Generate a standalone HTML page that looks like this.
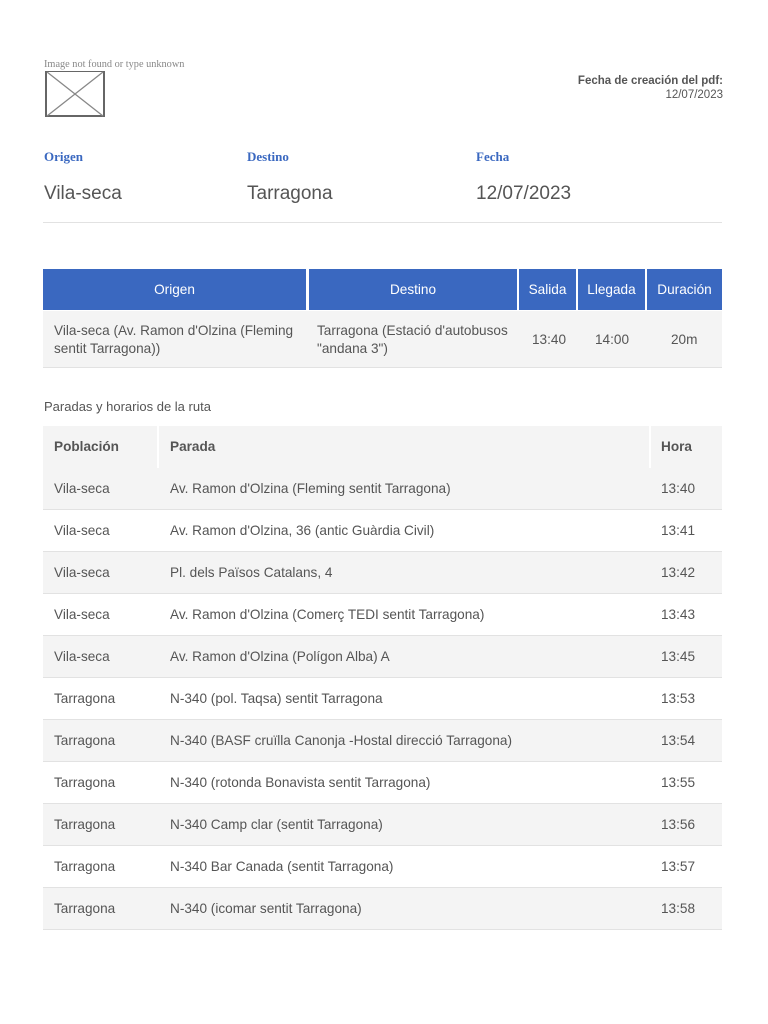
<!DOCTYPE html>
<html><head><meta charset="utf-8"><style>
*{margin:0;padding:0;box-sizing:border-box}
body{width:768px;height:1024px;background:#fff;font-family:"Liberation Sans",sans-serif;color:#555;position:relative;overflow:hidden}
.a{position:absolute;white-space:nowrap}
.lbl{font-family:"Liberation Serif",serif;font-weight:bold;color:#3a68c0;font-size:13px}
.big{font-size:19px;color:#555}
.h{position:absolute;top:269px;height:41px;background:#3a68c0;color:#fff;font-size:13.6px;display:flex;align-items:center;justify-content:center}
.row{position:absolute;left:43px;width:679px;height:42px;border-bottom:1px solid #e2e2e2;font-size:13.6px;color:#555}
.row span{position:absolute;top:13px}
</style></head><body>
<div class="a" style="left:45px;top:71px;width:60px;height:46px;border:2px solid #666;border-top-width:1px;border-left-width:2px"></div>
<svg class="a" style="left:45px;top:71px" width="60" height="46"><path d="M2 1L58 45M58 1L2 45" stroke="#888" stroke-width="1.3"/></svg>
<div class="a" style="left:44px;top:59px;font-family:'Liberation Serif',serif;font-size:10.3px;color:#888">Image not found or type unknown</div>
<div class="a" style="right:45px;top:75px;font-size:11.5px;font-weight:bold;color:#555;text-align:right">Fecha de creación del pdf:</div>
<div class="a" style="right:45px;top:89px;font-size:11.5px;color:#555">12/07/2023</div>
<div class="a lbl" style="left:44px;top:149px">Origen</div>
<div class="a lbl" style="left:247px;top:149px">Destino</div>
<div class="a lbl" style="left:476px;top:149px">Fecha</div>
<div class="a big" style="left:44px;top:183px">Vila-seca</div>
<div class="a big" style="left:247px;top:183px">Tarragona</div>
<div class="a big" style="left:476px;top:183px">12/07/2023</div>
<div class="a" style="left:43px;top:222px;width:679px;height:1px;background:#e2e2e2"></div>
<div class="h" style="left:43px;width:263px">Origen</div>
<div class="h" style="left:309px;width:208px">Destino</div>
<div class="h" style="left:519px;width:57px">Salida</div>
<div class="h" style="left:578px;width:67px">Llegada</div>
<div class="h" style="left:647px;width:75px">Duración</div>
<div class="a" style="left:43px;top:311px;width:679px;height:57px;background:#f4f4f4;border-bottom:1px solid #e2e2e2;font-size:13.6px;color:#555;white-space:normal">
<div class="a" style="left:11px;top:11px;line-height:18px;white-space:normal;width:250px">Vila-seca (Av. Ramon d'Olzina (Fleming sentit Tarragona))</div>
<div class="a" style="left:274px;top:11px;line-height:18px;white-space:normal;width:200px">Tarragona (Estació d'autobusos "andana 3")</div>
<div class="a" style="left:489px;top:21px">13:40</div>
<div class="a" style="left:552px;top:21px">14:00</div>
<div class="a" style="left:628px;top:21px">20m</div>
</div>
<div class="a" style="left:44px;top:399px;font-size:13px;color:#555">Paradas y horarios de la ruta</div>
<div class="a" style="left:43px;top:426px;width:679px;height:42px;background:#f4f4f4;font-size:13.6px;font-weight:bold;color:#555">
<span class="a" style="left:11px;top:13px">Población</span>
<div class="a" style="left:114px;top:0;width:2px;height:42px;background:#fff"></div>
<span class="a" style="left:127px;top:13px">Parada</span>
<div class="a" style="left:606px;top:0;width:2px;height:42px;background:#fff"></div>
<span class="a" style="left:618px;top:13px">Hora</span>
</div>
<div class="row" style="top:468px;background:#f4f4f4"><span style="left:11px">Vila-seca</span><span style="left:127px">Av. Ramon d'Olzina (Fleming sentit Tarragona)</span><span style="left:618px">13:40</span></div>
<div class="row" style="top:510px;background:#fff"><span style="left:11px">Vila-seca</span><span style="left:127px">Av. Ramon d'Olzina, 36 (antic Guàrdia Civil)</span><span style="left:618px">13:41</span></div>
<div class="row" style="top:552px;background:#f4f4f4"><span style="left:11px">Vila-seca</span><span style="left:127px">Pl. dels Països Catalans, 4</span><span style="left:618px">13:42</span></div>
<div class="row" style="top:594px;background:#fff"><span style="left:11px">Vila-seca</span><span style="left:127px">Av. Ramon d'Olzina (Comerç TEDI sentit Tarragona)</span><span style="left:618px">13:43</span></div>
<div class="row" style="top:636px;background:#f4f4f4"><span style="left:11px">Vila-seca</span><span style="left:127px">Av. Ramon d'Olzina (Polígon Alba) A</span><span style="left:618px">13:45</span></div>
<div class="row" style="top:678px;background:#fff"><span style="left:11px">Tarragona</span><span style="left:127px">N-340 (pol. Taqsa) sentit Tarragona</span><span style="left:618px">13:53</span></div>
<div class="row" style="top:720px;background:#f4f4f4"><span style="left:11px">Tarragona</span><span style="left:127px">N-340 (BASF cruïlla Canonja -Hostal direcció Tarragona)</span><span style="left:618px">13:54</span></div>
<div class="row" style="top:762px;background:#fff"><span style="left:11px">Tarragona</span><span style="left:127px">N-340 (rotonda Bonavista sentit Tarragona)</span><span style="left:618px">13:55</span></div>
<div class="row" style="top:804px;background:#f4f4f4"><span style="left:11px">Tarragona</span><span style="left:127px">N-340 Camp clar (sentit Tarragona)</span><span style="left:618px">13:56</span></div>
<div class="row" style="top:846px;background:#fff"><span style="left:11px">Tarragona</span><span style="left:127px">N-340 Bar Canada (sentit Tarragona)</span><span style="left:618px">13:57</span></div>
<div class="row" style="top:888px;background:#f4f4f4"><span style="left:11px">Tarragona</span><span style="left:127px">N-340 (icomar sentit Tarragona)</span><span style="left:618px">13:58</span></div>
</body></html>
